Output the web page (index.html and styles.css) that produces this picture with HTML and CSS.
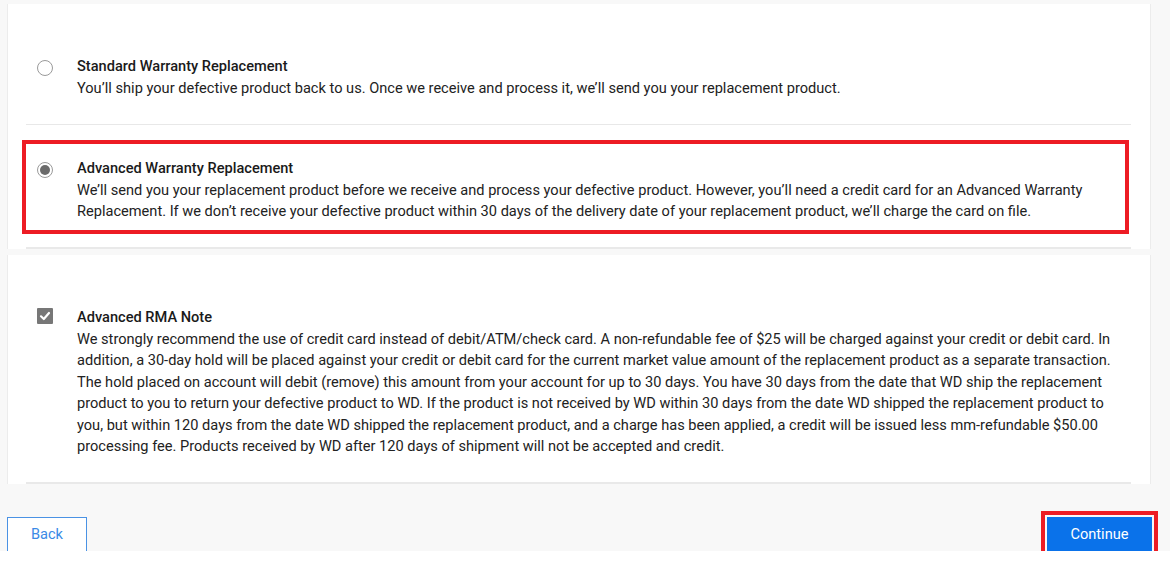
FILE: index.html
```html
<!DOCTYPE html>
<html lang="en">
<head>
    <meta charset="UTF-8">
    <meta name="viewport" content="width=device-width, initial-scale=1.0">
    <title>Warranty Replacement</title>
    <link rel="stylesheet" href="styles.css">
</head>
<body>
    <div class="page">
        <div class="card">
            <div class="list">
                <div class="option">
                    <span class="radio"></span>
                    <div class="option-text">
                        <div class="option-title">Standard Warranty Replacement</div>
                        <div class="option-desc">You’ll ship your defective product back to us. Once we receive and process it, we’ll send you your replacement product.</div>
                    </div>
                </div>
                <div class="option highlight">
                    <span class="radio checked"></span>
                    <div class="option-text">
                        <div class="option-title">Advanced Warranty Replacement</div>
                        <div class="option-desc">We’ll send you your replacement product before we receive and process your defective product. However, you’ll need a credit card for an Advanced Warranty Replacement. If we don’t receive your defective product within 30 days of the delivery date of your replacement product, we’ll charge the card on file.</div>
                    </div>
                </div>
            </div>
        </div>

        <div class="card note-card">
            <div class="list">
                <div class="option note">
                    <span class="checkbox">
                        <svg width="12" height="12" viewBox="0 0 12 12"><path d="M2 6.3 L4.8 9 L10 3" fill="none" stroke="#fff" stroke-width="2.2" stroke-linecap="round" stroke-linejoin="round"/></svg>
                    </span>
                    <div class="option-text">
                        <div class="option-title">Advanced RMA Note</div>
                        <div class="option-desc">We strongly recommend the use of credit card instead of debit/ATM/check card. A non-refundable fee of $25 will be charged against your credit or debit card. In addition, a 30-day hold will be placed against your credit or debit card for the current market value amount of the replacement product as a separate transaction. The hold placed on account will debit (remove) this amount from your account for up to 30 days. You have 30 days from the date that WD ship the replacement product to you to return your defective product to WD. If the product is not received by WD within 30 days from the date WD shipped the replacement product to you, but within 120 days from the date WD shipped the replacement product, and a charge has been applied, a credit will be issued less mm-refundable $50.00 processing fee. Products received by WD after 120 days of shipment will not be accepted and credit.</div>
                    </div>
                </div>
            </div>
        </div>

        <div class="actions">
            <button class="btn btn-back">Back</button>
            <button class="btn btn-continue">Continue</button>
        </div>
    </div>
</body>
</html>
```

FILE: styles.css
```css
body {
    margin: 0;
    background-color: #ffffff;
    font-family: Roboto, "Liberation Sans", Arial, sans-serif;
    font-size: 14.6px;
    color: #222;
}
.page {
    background-color: #f8f8f8;
    padding: 4px 18px 0 7px;
}
.card {
    background-color: #fff;
    border-left: 1px solid #ececec;
    border-right: 1px solid #ececec;
    padding: 0 19px 0 18px;
    margin-right: 1px;
}
.note-card {
    margin-top: 6px;
}
.list {
    border-bottom: 2px solid #e9e9e9;
    padding-bottom: 13px;
}
.note-card .list {
    padding-bottom: 0;
}
.option {
    display: flex;
    align-items: flex-start;
    padding: 51px 0 24px 11px;
    border-bottom: 1px solid #e8e8e8;
}
.option.highlight {
    border: 4px solid #ed1c24;
    margin: 15px 2px 0 -4px;
    padding: 13px 0 7px 11px;
}
.option.note {
    border-bottom: none;
    padding: 51px 0 24px 11px;
}
.radio {
    flex: none;
    width: 14px;
    height: 14px;
    border: 1px solid #9a9a9a;
    border-radius: 50%;
    margin-top: 5px;
    margin-right: 24px;
    position: relative;
    background-color: #fff;
}
.radio.checked::after {
    content: "";
    position: absolute;
    left: 2px;
    top: 2px;
    width: 10px;
    height: 10px;
    border-radius: 50%;
    background-color: #6b6b6b;
}
.checkbox {
    flex: none;
    width: 16px;
    height: 16px;
    background-color: #777;
    border-radius: 1px;
    margin-top: 2px;
    margin-right: 24px;
    display: flex;
    align-items: center;
    justify-content: center;
}
.option-text {
    max-width: 1044px;
}
.option-title {
    font-weight: 500;
    line-height: 22px;
    margin-bottom: 1px;
    color: #1a1a1a;
}
.option-desc {
    line-height: 21.5px;
    color: #222;
}
.actions {
    display: flex;
    justify-content: space-between;
    padding-top: 33px;
    height: 34px;
}
.btn {
    font-family: Roboto, "Liberation Sans", Arial, sans-serif;
    font-size: 14.6px;
    height: 35px;
    border-radius: 0;
    cursor: pointer;
}
.btn-back {
    width: 80px;
    background-color: #fff;
    border: 1px solid #4a92e4;
    color: #3a8ae6;
}
.btn-continue {
    width: 105px;
    background-color: #0a72ea;
    border: 1px solid #0a72ea;
    color: #fff;
    outline: 4px solid #ed1c24;
    outline-offset: 2px;
}
```
